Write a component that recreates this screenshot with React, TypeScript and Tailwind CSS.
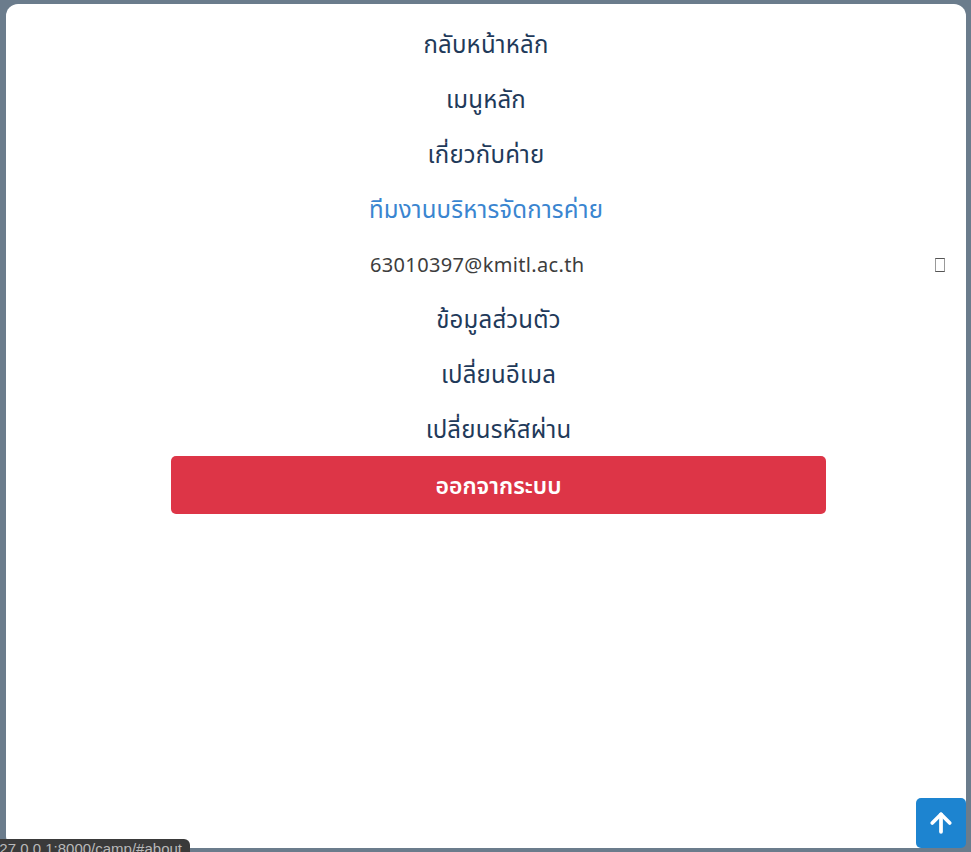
import { ArrowUp } from "lucide-react";

const thai = "font-['Noto_Sans','Noto_Sans_Thai','Liberation_Sans',sans-serif]";

const topLinks = ["กลับหน้าหลัก", "เมนูหลัก", "เกี่ยวกับค่าย"];
const accountLinks = ["ข้อมูลส่วนตัว", "เปลี่ยนอีเมล", "เปลี่ยนรหัสผ่าน"];

const MenuLink = ({ label, active }: { label: string; active?: boolean }) => (
  <a className={`h-[55px] flex items-center justify-center text-[24px] tracking-[0.2px] ${active ? "text-[#3a85d0]" : "text-[#1f3a5a]"}`}>
    {label}
  </a>
);

export default function App() {
  return (
    <div className={`relative h-[852px] overflow-hidden bg-[#6b7c8c] pt-1 pb-1 pl-1.5 pr-[5px] ${thai}`}>
      <div className="h-full rounded-xl bg-white pt-3">
        {topLinks.map((label) => (
          <MenuLink key={label} label={label} />
        ))}
        <MenuLink label="ทีมงานบริหารจัดการค่าย" active />
        <div className="h-[55px] mt-[1px] -mb-[1px] flex items-center pl-[364px] pr-[21px] justify-between text-[20px] tracking-[0.35px] text-[#3d3d3d]">
          <span>63010397@kmitl.ac.th</span>
          <span className="w-[10px] h-[14px] border border-[#555555] border-x-[#999999]" />
        </div>
        <div className="pl-[165px] pr-[140px]">
          {accountLinks.map((label) => (
            <MenuLink key={label} label={label} />
          ))}
          <button className="w-full h-[58px] rounded-[5px] bg-[#dd3547] text-white text-[23px] font-semibold">
            ออกจากระบบ
          </button>
        </div>
      </div>
      <button className="absolute right-[5px] bottom-[4px] w-[50px] h-[50px] rounded-[5px] bg-[#1d84d0] flex items-center justify-center text-white">
        <ArrowUp size={30} strokeWidth={3} />
      </button>
      <div className="absolute left-0 bottom-0 w-[190px] h-[13px] overflow-hidden rounded-tr-[6px] bg-[#3a3a3a] font-['Liberation_Sans',sans-serif] text-[15px] leading-[18px] whitespace-nowrap text-[#b9b9b9]">
        <span className="block -ml-[9px] pt-[1px]">127.0.0.1:8000/camp/#about</span>
      </div>
    </div>
  );
}
